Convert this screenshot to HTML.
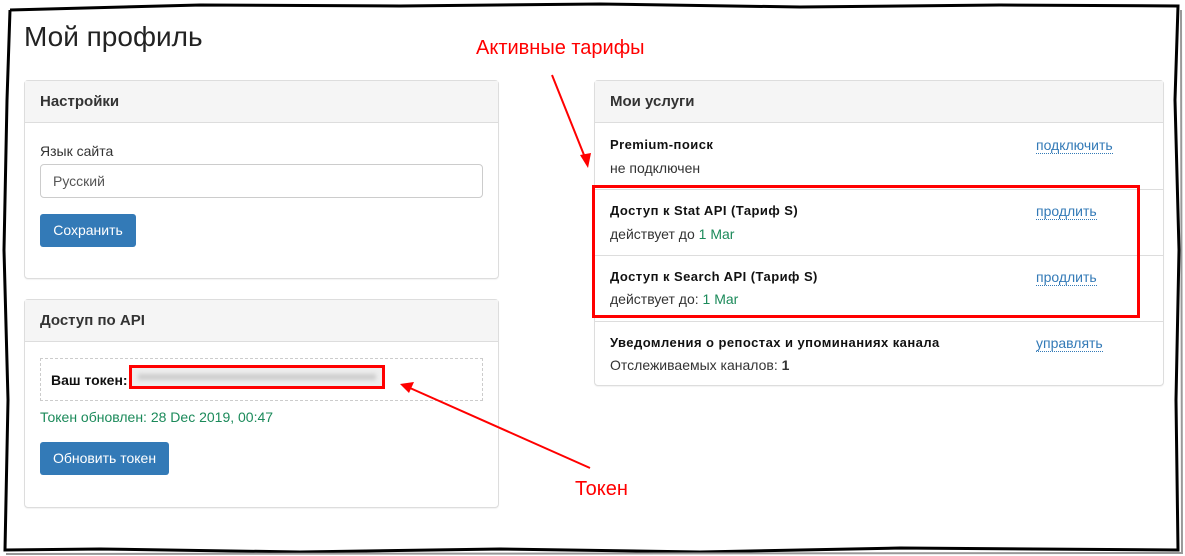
<!DOCTYPE html>
<html><head><meta charset="utf-8"><style>
*{box-sizing:border-box;margin:0;padding:0}
body{width:1185px;height:556px;background:#fff;position:relative;overflow:hidden;font-family:"Liberation Sans",sans-serif;font-size:14px;color:#333}
.a{position:absolute}
.panel{position:absolute;border:1px solid #ddd;border-radius:4px;background:#fff;box-shadow:0 1px 1px rgba(0,0,0,.05)}
.ph{height:42px;background:#f5f5f5;border-bottom:1px solid #ddd;padding:12px 15px;font-weight:bold;font-size:15px;color:#333}
.btn{position:absolute;background:#337ab7;color:#fff;border-radius:3px;font-size:14px;line-height:33px;text-align:center}
.lnk{color:#337ab7;border-bottom:1px dotted #337ab7;line-height:15px}
.g{color:#1b8a5a}
.t{font-weight:bold;color:#111;font-size:13px;letter-spacing:0.45px}
.red{color:#f00;font-size:20px;font-family:"Liberation Sans",sans-serif}
</style></head><body>
<svg class="a" style="left:0;top:0" width="1185" height="556">
<polyline fill="none" stroke="#000" stroke-width="3" points="10,10 200,5 400,6 600,4 800,7 1000,5 1178,6 1175,100 1179,250 1176,400 1178,550 900,548 700,552 500,549 300,552 100,549 5,550 8,400 4,250 7,100 10,10"/>
<polyline fill="none" stroke="#999" stroke-width="2" points="1181,10 1182,553 6,554"/>
</svg>
<div class="a" style="left:24px;top:21px;font-size:28px;color:#222">Мой профиль</div>
<div class="a red" style="left:476px;top:37px">Активные тарифы</div>
<div class="a red" style="left:575px;top:478px">Токен</div>

<div class="panel" style="left:24px;top:80px;width:475px;height:199px">
<div class="ph">Настройки</div>
<div class="a" style="left:15px;top:62px">Язык сайта</div>
<div class="a" style="left:15px;top:83px;width:443px;height:34px;border:1px solid #ccc;border-radius:4px;padding:8px 12px;color:#555">Русский</div>
<div class="btn" style="left:15px;top:133px;width:96px">Сохранить</div>
</div>

<div class="panel" style="left:24px;top:299px;width:475px;height:209px">
<div class="ph">Доступ по API</div>
<div class="a" style="left:15px;top:58px;width:443px;height:43px;border:1px dashed #ccc"></div>
<div class="a" style="left:26px;top:72px;font-weight:bold;color:#111">Ваш токен:</div>
<div class="a" style="left:104px;top:65px;width:256px;height:24px;border:3px solid #f00;background:#eee"><div style="margin:6px 6px;height:6px;background:#ccc;filter:blur(2px)"></div></div>
<div class="a g" style="left:15px;top:109px">Токен обновлен: 28 Dec 2019, 00:47</div>
<div class="btn" style="left:15px;top:142px;width:129px">Обновить токен</div>
</div>

<div class="panel" style="left:594px;top:80px;width:570px;height:306px">
<div class="ph">Мои услуги</div>
<div class="a t" style="left:15px;top:56px">Premium-поиск</div>
<div class="a" style="left:15px;top:79px">не подключен</div>
<div class="a lnk" style="left:441px;top:57px">подключить</div>
<div class="a" style="left:0;top:108px;width:568px;border-top:1px solid #ddd"></div>
<div class="a t" style="left:15px;top:122px">Доступ к Stat API (Тариф S)</div>
<div class="a" style="left:15px;top:145px">действует до <span class="g">1 Mar</span></div>
<div class="a lnk" style="left:441px;top:123px">продлить</div>
<div class="a" style="left:0;top:174px;width:568px;border-top:1px solid #ddd"></div>
<div class="a t" style="left:15px;top:188px">Доступ к Search API (Тариф S)</div>
<div class="a" style="left:15px;top:210px">действует до: <span class="g">1 Mar</span></div>
<div class="a lnk" style="left:441px;top:189px">продлить</div>
<div class="a" style="left:0;top:240px;width:568px;border-top:1px solid #ddd"></div>
<div class="a t" style="left:15px;top:254px">Уведомления о репостах и упоминаниях канала</div>
<div class="a" style="left:15px;top:276px">Отслеживаемых каналов: <b>1</b></div>
<div class="a lnk" style="left:441px;top:255px">управлять</div>
</div>
<div class="a" style="left:592px;top:185px;width:548px;height:133px;border:3px solid #f00"></div>
<svg class="a" style="left:0;top:0;z-index:5" width="1185" height="556">
<line x1="552" y1="75" x2="586" y2="160" stroke="#f00" stroke-width="2"/>
<polygon points="588,168 580,155 591,153" fill="#f00"/>
<line x1="590" y1="468" x2="410" y2="388" stroke="#f00" stroke-width="2"/>
<polygon points="400,384 414,382 409,393" fill="#f00"/>
</svg>
</body></html>
